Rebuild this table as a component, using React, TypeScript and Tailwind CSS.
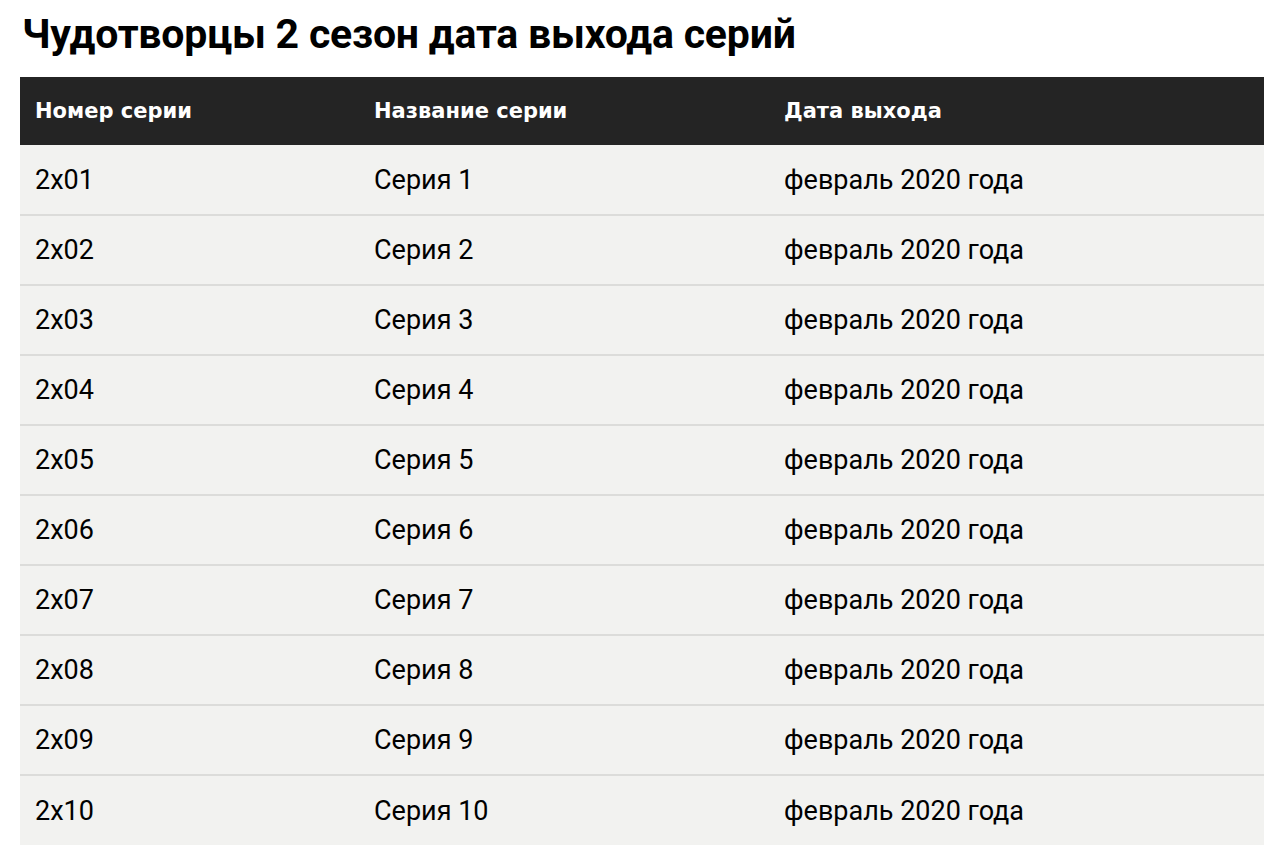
import React from "react";

const episodes = Array.from({ length: 10 }, (_, i) => ({
  num: `2x${String(i + 1).padStart(2, "0")}`,
  title: `Серия ${i + 1}`,
  date: "февраль 2020 года",
}));

export default function App() {
  return (
    <main className="bg-white min-h-screen pl-[20px] pr-[16px] pt-[10px] font-['Roboto',sans-serif] text-black">
      <h1 className="text-[41px] leading-[48px] font-bold tracking-[-0.2px] pl-[2px] mb-[19px]">
        Чудотворцы 2 сезон дата выхода серий
      </h1>

      <table className="w-[1244px] border-collapse table-fixed">
        <colgroup>
          <col className="w-[339px]" />
          <col className="w-[410px]" />
          <col className="w-[495px]" />
        </colgroup>
        <thead>
          <tr className="bg-[#242424] text-white h-[68px]">
            <th className="text-left pl-[15px] pt-[2px] font-['DejaVu_Sans',sans-serif] font-bold text-[21px]">
              Номер серии
            </th>
            <th className="text-left pl-[15px] pt-[2px] font-['DejaVu_Sans',sans-serif] font-bold text-[21px]">
              Название серии
            </th>
            <th className="text-left pl-[15px] pt-[2px] font-['DejaVu_Sans',sans-serif] font-bold text-[21px]">
              Дата выхода
            </th>
          </tr>
        </thead>
        <tbody>
          {episodes.map((ep, i) => (
            <tr
              key={ep.num}
              className={`bg-[#f2f2f0] h-[70px] text-[27px] ${i > 0 ? "border-t-2 border-[#dcdcda]" : ""}`}
            >
              <td className="pl-[15px] pt-[1px]">{ep.num}</td>
              <td className="pl-[15px] pt-[1px]">{ep.title}</td>
              <td className="pl-[15px] pt-[1px]">{ep.date}</td>
            </tr>
          ))}
        </tbody>
      </table>
    </main>
  );
}
